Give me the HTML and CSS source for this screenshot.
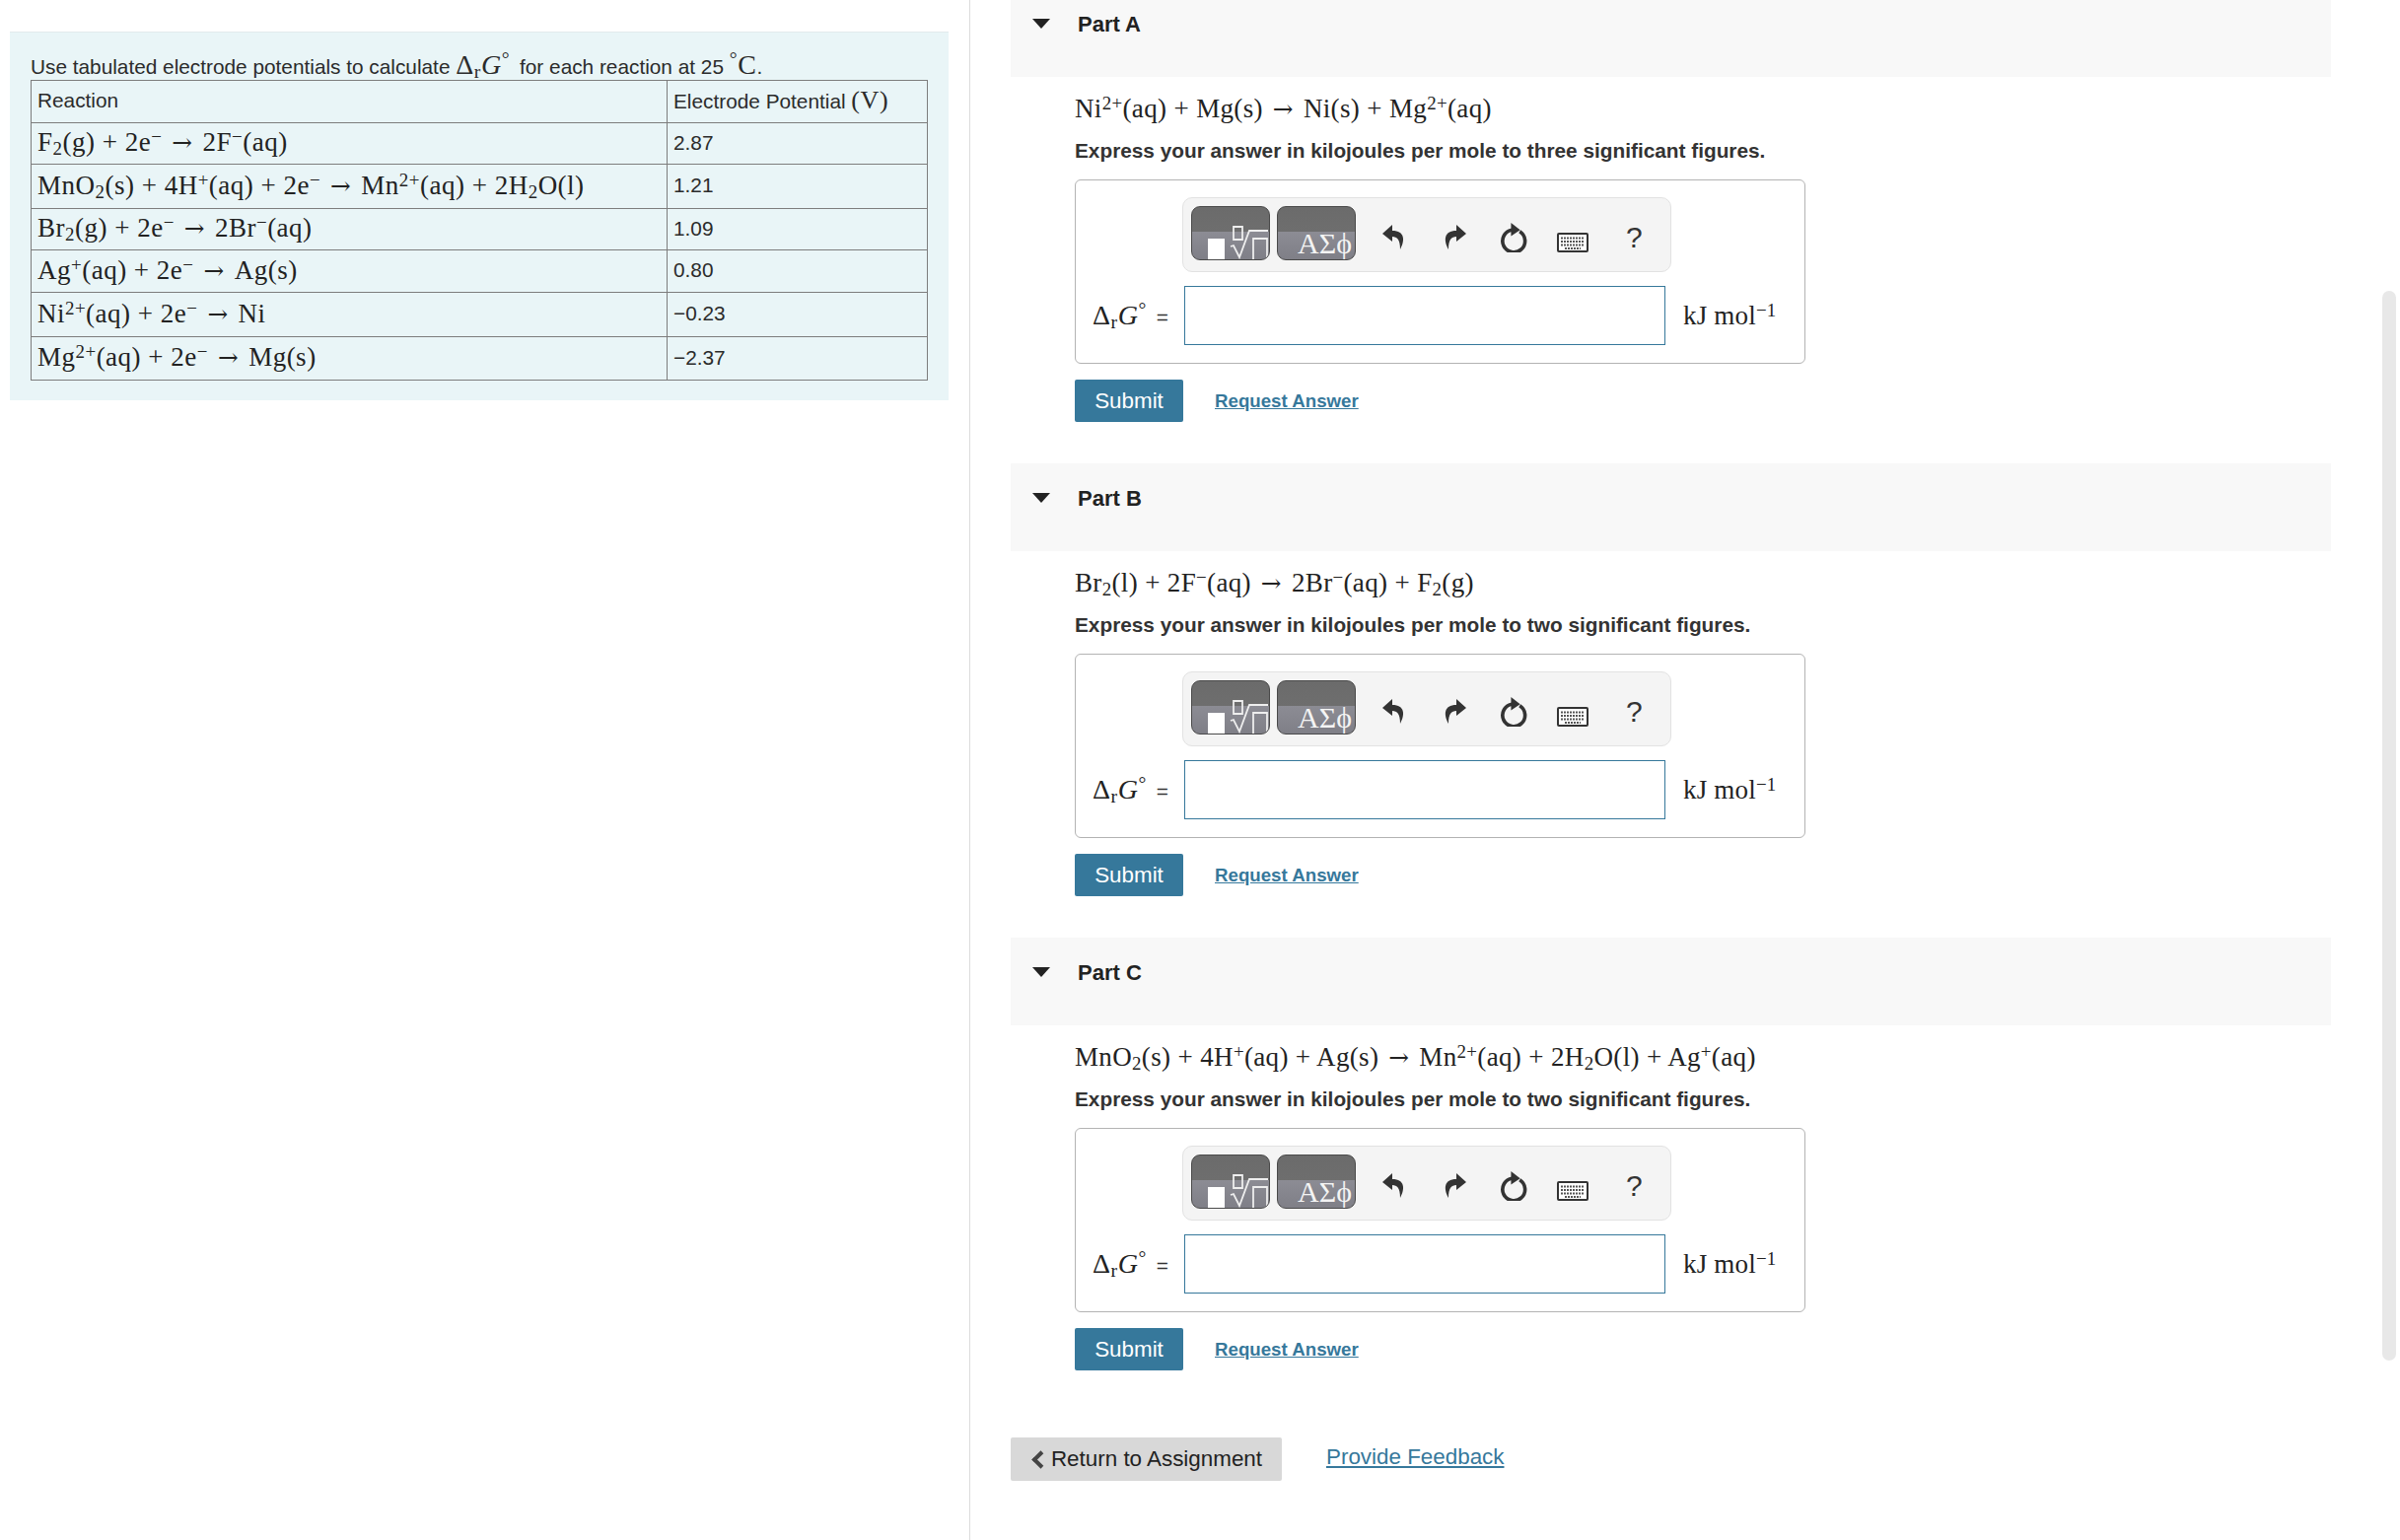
FILE: index.html
```html
<!DOCTYPE html>
<html lang="en">
<head>
<meta charset="utf-8">
<title>Electrode potentials</title>
<link rel="stylesheet" href="styles.css">
</head>
<body>
<svg class="defs" width="0" height="0" aria-hidden="true">
  <symbol id="i-undo" viewBox="0 0 24 28"><path d="M10 2 0 11 10 19V14C15 14 18 17 18 27 23 18 23 8 10 8Z"/></symbol>
  <symbol id="i-refresh" viewBox="0 0 28 30"><path class="arc" d="M20.500 9.500A11 11 0 1 1 13 8"/><path d="M12 1 21 8 12 14Z"/></symbol>
  <symbol id="i-kbd" viewBox="0 0 32 20"><rect class="kb" x="1" y="1" width="30" height="18" rx="1"/><path class="keys" d="M4 5.500H28M4 9H28M4 12.500H28M8 16H24"/></symbol>
  <symbol id="i-tpl" viewBox="0 0 80 55"><rect class="w" x="17" y="33" width="17" height="22"/><path class="l" d="M43 21H52V34H43ZM40 41 43 40 49 52 59 25H78M63 55V33H77V55"/></symbol>
</svg>
<div class="page">
  <aside class="left">
    <section class="intro">
      <p class="lead">Use tabulated electrode potentials to calculate <span class="m gibbs"><span class="delta">Δ</span><sub>r</sub><i>G</i><sup>°</sup></span> for each reaction at 25 <span class="m"><sup>°</sup>C</span>.</p>
      <table class="tbl">
        <colgroup><col class="c1"><col class="c2"></colgroup>
        <tr class="r43"><td>Reaction</td><td>Electrode Potential <span class="m">(V)</span></td></tr>
        <tr class="r42"><td class="m">F<sub>2</sub>(g) + 2e<sup>−</sup><span class="ar">→</span>2F<sup>−</sup>(aq)</td><td>2.87</td></tr>
        <tr class="r45"><td class="m">MnO<sub>2</sub>(s) + 4H<sup>+</sup>(aq) + 2e<sup>−</sup><span class="ar">→</span>Mn<sup>2+</sup>(aq) + 2H<sub>2</sub>O(l)</td><td>1.21</td></tr>
        <tr class="r42"><td class="m">Br<sub>2</sub>(g) + 2e<sup>−</sup><span class="ar">→</span>2Br<sup>−</sup>(aq)</td><td>1.09</td></tr>
        <tr class="r43"><td class="m">Ag<sup>+</sup>(aq) + 2e<sup>−</sup><span class="ar">→</span>Ag(s)</td><td>0.80</td></tr>
        <tr class="r45"><td class="m">Ni<sup>2+</sup>(aq) + 2e<sup>−</sup><span class="ar">→</span>Ni</td><td>−0.23</td></tr>
        <tr class="r44"><td class="m">Mg<sup>2+</sup>(aq) + 2e<sup>−</sup><span class="ar">→</span>Mg(s)</td><td>−2.37</td></tr>
      </table>
    </section>
  </aside>
  <main class="right">
    <section class="part">
      <header class="head"><span class="tri"></span><h2>Part A</h2></header>
      <div class="body">
        <p class="eq m">Ni<sup>2+</sup>(aq) + Mg(s)<span class="ar">→</span>Ni(s) + Mg<sup>2+</sup>(aq)</p>
        <p class="ins">Express your answer in kilojoules per mole to three significant figures.</p>
        <div class="box">
          <div class="toolbar">
            <span class="tplbtn"><svg class="tpl"><use href="#i-tpl"/></svg></span>
            <span class="tplbtn sym">ΑΣϕ</span>
            <svg class="ic undo"><use href="#i-undo"/></svg>
            <svg class="ic redo"><use href="#i-undo"/></svg>
            <svg class="ic refresh"><use href="#i-refresh"/></svg>
            <svg class="ic kbd"><use href="#i-kbd"/></svg>
            <span class="help">?</span>
          </div>
          <div class="answer">
            <span class="lab"><span class="m"><span class="delta">Δ</span><sub>r</sub><i>G</i><sup>°</sup></span> =</span>
            <input class="inp" type="text" aria-label="answer">
            <span class="unit m">kJ mol<sup>−1</sup></span>
          </div>
        </div>
        <div class="actions"><button class="submit">Submit</button><a class="req" href="#">Request Answer</a></div>
      </div>
    </section>
    <section class="part">
      <header class="head"><span class="tri"></span><h2>Part B</h2></header>
      <div class="body">
        <p class="eq m">Br<sub>2</sub>(l) + 2F<sup>−</sup>(aq)<span class="ar">→</span>2Br<sup>−</sup>(aq) + F<sub>2</sub>(g)</p>
        <p class="ins">Express your answer in kilojoules per mole to two significant figures.</p>
        <div class="box">
          <div class="toolbar">
            <span class="tplbtn"><svg class="tpl"><use href="#i-tpl"/></svg></span>
            <span class="tplbtn sym">ΑΣϕ</span>
            <svg class="ic undo"><use href="#i-undo"/></svg>
            <svg class="ic redo"><use href="#i-undo"/></svg>
            <svg class="ic refresh"><use href="#i-refresh"/></svg>
            <svg class="ic kbd"><use href="#i-kbd"/></svg>
            <span class="help">?</span>
          </div>
          <div class="answer">
            <span class="lab"><span class="m"><span class="delta">Δ</span><sub>r</sub><i>G</i><sup>°</sup></span> =</span>
            <input class="inp" type="text" aria-label="answer">
            <span class="unit m">kJ mol<sup>−1</sup></span>
          </div>
        </div>
        <div class="actions"><button class="submit">Submit</button><a class="req" href="#">Request Answer</a></div>
      </div>
    </section>
    <section class="part">
      <header class="head"><span class="tri"></span><h2>Part C</h2></header>
      <div class="body">
        <p class="eq m">MnO<sub>2</sub>(s) + 4H<sup>+</sup>(aq) + Ag(s)<span class="ar">→</span>Mn<sup>2+</sup>(aq) + 2H<sub>2</sub>O(l) + Ag<sup>+</sup>(aq)</p>
        <p class="ins">Express your answer in kilojoules per mole to two significant figures.</p>
        <div class="box">
          <div class="toolbar">
            <span class="tplbtn"><svg class="tpl"><use href="#i-tpl"/></svg></span>
            <span class="tplbtn sym">ΑΣϕ</span>
            <svg class="ic undo"><use href="#i-undo"/></svg>
            <svg class="ic redo"><use href="#i-undo"/></svg>
            <svg class="ic refresh"><use href="#i-refresh"/></svg>
            <svg class="ic kbd"><use href="#i-kbd"/></svg>
            <span class="help">?</span>
          </div>
          <div class="answer">
            <span class="lab"><span class="m"><span class="delta">Δ</span><sub>r</sub><i>G</i><sup>°</sup></span> =</span>
            <input class="inp" type="text" aria-label="answer">
            <span class="unit m">kJ mol<sup>−1</sup></span>
          </div>
        </div>
        <div class="actions"><button class="submit">Submit</button><a class="req" href="#">Request Answer</a></div>
      </div>
    </section>
    <footer class="foot">
      <button class="ret"><span class="chev"></span>Return to Assignment</button>
      <a class="fb" href="#">Provide Feedback</a>
    </footer>
  </main>
</div>
<div class="scroll"></div>
</body>
</html>
```
FILE: styles.css
```css
* { box-sizing: border-box; }
html, body { margin: 0; height: 100%; overflow: hidden; background: #fff; }
body { font-family: "Liberation Sans", Arial, sans-serif; color: #222; font-size: 20.800px; position: relative; }
.defs { position: absolute; }
p { margin: 0; }
.page { display: flex; height: 1562px; }
.left { width: 984px; flex: none; border-right: 1px solid #dcdcdc; padding: 32px 0 0 10px; }
.intro { width: 952px; height: 374px; background: #e9f5f7; border-top: 1px solid #e2eaec; padding: 18px 21px 0 21px; }
.lead { height: 30px; line-height: 29px; white-space: nowrap; font-size: 20.800px; color: #2b2b2b; }
.m { font-family: "Liberation Serif", "Times New Roman", serif; }
.lead .m { font-size: 28px; letter-spacing: 0.6px; }
.lead .gibbs { margin-right: 4px; }
.ar { font-family: "DejaVu Serif", serif; font-size: 0.92em; margin: 0 0.4em; }
sub, sup { font-size: 0.7em; line-height: 0; }
sup { vertical-align: 0.45em; }
sub { vertical-align: -0.22em; }
.tbl { border-collapse: collapse; table-layout: fixed; width: 909px; }
.c1 { width: 645px; }
.c2 { width: 264px; }
.tbl td { border: 1px solid #7d7d7d; padding: 0 6px 2px; white-space: nowrap; font-size: 20.800px; color: #2b2b2b; }
.tbl td .m { font-size: 26px; letter-spacing: 0.6px; }
.tbl td.m { font-size: 27px; color: #222; letter-spacing: 0.5px; }
.r42 { height: 42px; }
.r43 { height: 43px; }
.r44 { height: 44px; }
.r45 { height: 45px; }
.right { flex: 1; min-width: 0; padding: 0 70px 0 41px; margin-top: -11px; }
.part { margin-bottom: 41px; }
.head { height: 89px; background: #f8f8f8; display: flex; align-items: flex-start; padding: 23px 0 0 22px; }
.tri { width: 0; height: 0; border-left: 9px solid transparent; border-right: 9px solid transparent; border-top: 10px solid #222; margin-top: 7px; }
.head h2 { margin: 0 0 0 28px; font-size: 22px; line-height: 26px; font-weight: 700; color: #222; }
.body { padding: 14px 0 0 65px; height: 351px; }
.eq { font-size: 27px; line-height: 36px; white-space: nowrap; letter-spacing: 0.35px; }
.ins { margin-top: 5px; font-weight: 700; font-size: 20.800px; line-height: 38px; color: #333; white-space: nowrap; }
.box { margin-top: 10px; width: 741px; height: 187px; border: 1.500px solid #b3b3b3; border-radius: 6px; padding: 17px 0 0 0; }
.toolbar { margin-left: 108px; width: 496px; height: 76px; background: #f4f4f4; border: 1px solid #e2e2e2; border-radius: 10px; display: flex; align-items: center; padding-left: 8px; }
.tplbtn { width: 80px; height: 55px; border-radius: 9px; border: 1px solid #4a4a4a; background: linear-gradient(#6b6b6b 0, #6e6e6e 47%, #8c8c94 47%, #7f7f87 100%); overflow: hidden; margin-right: 7px; display: block; flex: none; align-self: flex-start; margin-top: 8px; }
.tpl { width: 80px; height: 55px; display: block; margin: -1px; }
.w { fill: #fff; }
.l { fill: none; stroke: #eee; stroke-width: 1.800; }
.sym { font-family: "Liberation Serif", serif; color: #f4f4f4; font-size: 30px; line-height: 28px; text-align: right; padding: 23px 3px 0 0; white-space: nowrap; margin-right: 0; overflow: visible; }
.ic { display: block; fill: #333; flex: none; }
.undo { width: 24px; height: 28px; margin-left: 27px; margin-top: 4px; }
.redo { width: 24px; height: 28px; margin-left: 37px; margin-top: 4px; transform: scaleX(-1); }
.refresh { width: 29px; height: 31px; margin-left: 33px; margin-top: 4px; }
.arc { fill: none; stroke: #333; stroke-width: 3.500; }
.kbd { width: 32px; height: 20px; margin-left: 30px; margin-top: 15px; }
.kb { fill: #fff; stroke: #333; stroke-width: 2; }
.keys { fill: none; stroke: #555; stroke-width: 2; stroke-dasharray: 2 1; }
.help { margin-left: 38px; margin-top: 6px; font-size: 30px; color: #333; line-height: 30px; }
.answer { display: flex; align-items: center; margin-top: 14px; height: 60px; padding-left: 17px; }
.lab { width: 93px; flex: none; white-space: nowrap; font-size: 20.800px; color: #333; }
.lab .m { font-size: 28px; color: #222; letter-spacing: 0.6px; margin-right: 4px; }
.inp { width: 488px; height: 60px; border: 1.500px solid #36789b; background: #fff; flex: none; outline: none; }
.unit { margin-left: 18px; font-size: 27px; white-space: nowrap; color: #222; letter-spacing: 0.2px; }
.actions { display: flex; align-items: center; margin-top: 16px; }
.submit { width: 110px; height: 43px; background: #36789b; color: #fff; border: 0; border-radius: 2px; font: 400 22.400px "Liberation Sans", Arial, sans-serif; padding: 0; }
.req { margin-left: 32px; font-weight: 700; font-size: 18.700px; color: #36789b; }
.foot { display: flex; align-items: center; margin-top: 67px; }
.ret { width: 275px; height: 44px; background: #d8d8d8; border: 0; border-radius: 2px; font: 400 22.400px "Liberation Sans", Arial, sans-serif; color: #222; padding: 0; display: flex; align-items: center; justify-content: center; }
.chev { width: 13px; height: 13px; border-left: 4px solid #444; border-bottom: 4px solid #444; transform: rotate(45deg); margin-right: 4px; margin-left: 4px; }
.fb { margin-left: 45px; font-size: 22.400px; color: #36789b; position: relative; top: -2px; }
.scroll { position: absolute; left: 2416px; top: 295px; width: 14px; height: 1085px; background: #e8e8e8; border-radius: 7px; }
```
